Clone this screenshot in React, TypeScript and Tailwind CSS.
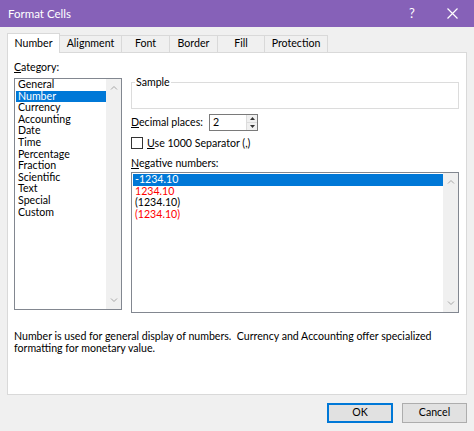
import React from 'react';

const categories = [
  'General',
  'Number',
  'Currency',
  'Accounting',
  'Date',
  'Time',
  'Percentage',
  'Fraction',
  'Scientific',
  'Text',
  'Special',
  'Custom',
];

const negatives = [
  { label: '-1234.10', red: false },
  { label: '1234.10', red: true },
  { label: '(1234.10)', red: false },
  { label: '(1234.10)', red: true },
];

const tabs = ['Number', 'Alignment', 'Font', 'Border', 'Fill', 'Protection'];
const tabWidths = ['w-[53px]', 'w-[62px]', 'w-[48px]', 'w-[48px]', 'w-[47px]', 'w-[63px]'];

const Chevron: React.FC<{ up?: boolean }> = ({ up }) => (
  <svg width="8" height="5" viewBox="0 0 8 5" className="text-[#a6a6a6]">
    <path d={up ? 'M1 4.5 L4 1.5 L7 4.5' : 'M1 0.5 L4 3.5 L7 0.5'} fill="none" stroke="currentColor" strokeWidth="1" />
  </svg>
);

const ScrollTrack: React.FC = () => (
  <div className="w-[15px] h-full bg-[#f0f0f0] flex flex-col items-center justify-between py-[6px]">
    <Chevron up />
    <Chevron />
  </div>
);

const App: React.FC = () => {
  return (
    <div
      className="w-[474px] h-[431px] bg-[#f0f0f0] flex flex-col text-[10.6px] text-black overflow-hidden whitespace-nowrap"
      style={{ fontFamily: 'Lato, "Noto Sans", sans-serif' }}
    >
      <div className="h-[27px] bg-[#8661b8] flex items-center pl-[8px] text-white text-[11.5px] shrink-0">
        <span className="flex-1">Format Cells</span>
        <span className="w-[10px] text-center mr-[30px] text-[13px]">?</span>
        <svg width="11" height="11" viewBox="0 0 11 11" className="mr-[16px]">
          <path d="M0.5 0.5 L10.5 10.5 M10.5 0.5 L0.5 10.5" stroke="white" strokeWidth="1.2" />
        </svg>
      </div>

      <div className="flex-1 flex flex-col pl-[7px] pr-[7px] pt-[6px]">
        <div className="flex items-end h-[19px] shrink-0">
          {tabs.map((t, i) =>
            i === 0 ? (
              <div
                key={t}
                className={`${tabWidths[i]} h-[20px] -mb-px bg-white border border-b-0 border-[#d9d9d9] flex items-center justify-center z-10`}
              >
                {t}
              </div>
            ) : (
              <div
                key={t}
                className={`${tabWidths[i]} h-[17px] bg-[#f0f0f0] border border-l-0 border-b-0 border-[#d9d9d9] flex items-center justify-center`}
              >
                {t}
              </div>
            )
          )}
        </div>

        <div className="h-[343px] bg-white border border-[#d9d9d9] flex flex-col shrink-0">
          <div className="flex pt-[8px] pl-[6px]">
            <div className="w-[108px] flex flex-col">
              <div className="h-[17px] leading-[12px]">
                <span className="underline">C</span>ategory:
              </div>
              <div className="h-[232px] border border-[#828790] flex">
                <div className="flex-1 flex flex-col pl-px">
                  {categories.map((c) => (
                    <div
                      key={c}
                      className={`h-[11.6px] leading-[11.6px] pl-[2px] ${c === 'Number' ? 'bg-[#0078d7] text-white' : ''}`}
                    >
                      {c}
                    </div>
                  ))}
                </div>
                <ScrollTrack />
              </div>
            </div>

            <div className="w-[328px] ml-[9px] flex flex-col">
              <div className="mt-[21px] h-[27px] border border-[#dcdcdc] relative">
                <span className="absolute -top-[7px] left-[3px] bg-white px-px leading-[12px]">Sample</span>
              </div>
              <div className="flex items-center mt-[5px] h-[17px]">
                <span className="w-[78px]">
                  <span className="underline">D</span>ecimal places:
                </span>
                <div className="w-[49px] h-[17px] border border-[#7a7a7a] flex">
                  <span className="flex-1 pl-[3px] leading-[15px]">2</span>
                  <div className="w-[11px] border-l border-[#dcdcdc] flex flex-col bg-[#f0f0f0]">
                    <div className="flex-1 flex items-center justify-center border-b border-[#dcdcdc]">
                      <svg width="5" height="3" viewBox="0 0 5 3">
                        <path d="M0 3 L2.5 0 L5 3 Z" fill="#333" />
                      </svg>
                    </div>
                    <div className="flex-1 flex items-center justify-center">
                      <svg width="5" height="3" viewBox="0 0 5 3">
                        <path d="M0 0 L2.5 3 L5 0 Z" fill="#333" />
                      </svg>
                    </div>
                  </div>
                </div>
              </div>
              <div className="flex items-center mt-[6px] h-[12px]">
                <div className="w-[12px] h-[12px] border border-[#333]" />
                <span className="ml-[4px] leading-[12px]">
                  <span className="underline">U</span>se 1000 Separator (,)
                </span>
              </div>
              <div className="mt-[8px] h-[14px] leading-[12px]">
                <span className="underline">N</span>egative numbers:
              </div>
              <div className="mt-px h-[141px] border border-[#828790] flex">
                <div className="flex-1 flex flex-col pt-px pl-px">
                  {negatives.map((n, i) => (
                    <div
                      key={i}
                      className={`h-[11.6px] leading-[11.6px] pl-[2px] ${
                        i === 0 ? 'bg-[#0078d7] text-white' : n.red ? 'text-[#ff0000]' : ''
                      }`}
                    >
                      {n.label}
                    </div>
                  ))}
                </div>
                <ScrollTrack />
              </div>
            </div>
          </div>

          <div className="pl-[6px] mt-[17px] leading-[12px]">
            Number is used for general display of numbers.&nbsp; Currency and Accounting offer specialized
            <br />
            formatting for monetary value.
          </div>
        </div>

        <div className="flex justify-end gap-[9px] mt-[8px]">
          <button className="w-[66px] h-[20px] bg-[#e1e1e1] border-2 border-[#0078d7] text-[10.6px]">OK</button>
          <button className="w-[65px] h-[20px] bg-[#e1e1e1] border border-[#adadad] text-[10.6px]">Cancel</button>
        </div>
      </div>
    </div>
  );
};

export default App;
